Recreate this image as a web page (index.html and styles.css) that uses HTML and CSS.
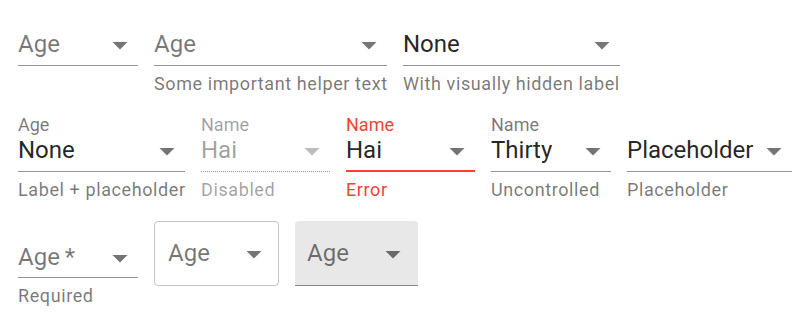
FILE: index.html
```html
<!DOCTYPE html>
<html lang="en">
<head>
<meta charset="utf-8">
<title>Simple selects</title>
<link rel="stylesheet" href="styles.css">
</head>
<body>
<form class="demo" autocomplete="off">
  <div class="row">
    <div class="fc w120">
      <label class="label">Age</label>
      <div class="input">
        <div class="select"></div>
        <svg class="arrow" viewBox="0 0 24 24"><path d="M7 10l5 5 5-5z"/></svg>
      </div>
    </div>
    <div class="fc w233">
      <label class="label">Age</label>
      <div class="input">
        <div class="select"></div>
        <svg class="arrow" viewBox="0 0 24 24"><path d="M7 10l5 5 5-5z"/></svg>
      </div>
      <p class="helper">Some important helper text</p>
    </div>
    <div class="fc w217">
      <div class="input">
        <div class="select">None</div>
        <svg class="arrow" viewBox="0 0 24 24"><path d="M7 10l5 5 5-5z"/></svg>
      </div>
      <p class="helper">With visually hidden label</p>
    </div>
  </div>

  <div class="row">
    <div class="fc w167">
      <label class="label shrink">Age</label>
      <div class="input">
        <div class="select">None</div>
        <svg class="arrow" viewBox="0 0 24 24"><path d="M7 10l5 5 5-5z"/></svg>
      </div>
      <p class="helper">Label + placeholder</p>
    </div>
    <div class="fc w129 disabled">
      <label class="label shrink">Name</label>
      <div class="input">
        <div class="select">Hai</div>
        <svg class="arrow" viewBox="0 0 24 24"><path d="M7 10l5 5 5-5z"/></svg>
      </div>
      <p class="helper">Disabled</p>
    </div>
    <div class="fc w129 error">
      <label class="label shrink">Name</label>
      <div class="input">
        <div class="select">Hai</div>
        <svg class="arrow" viewBox="0 0 24 24"><path d="M7 10l5 5 5-5z"/></svg>
      </div>
      <p class="helper">Error</p>
    </div>
    <div class="fc w120">
      <label class="label shrink">Name</label>
      <div class="input">
        <div class="select">Thirty</div>
        <svg class="arrow" viewBox="0 0 24 24"><path d="M7 10l5 5 5-5z"/></svg>
      </div>
      <p class="helper">Uncontrolled</p>
    </div>
    <div class="fc w165">
      <div class="input">
        <div class="select">Placeholder</div>
        <svg class="arrow" viewBox="0 0 24 24"><path d="M7 10l5 5 5-5z"/></svg>
      </div>
      <p class="helper">Placeholder</p>
    </div>
  </div>

  <div class="row">
    <div class="fc w120">
      <label class="label">Age<span class="asterisk">&thinsp;*</span></label>
      <div class="input">
        <div class="select"></div>
        <svg class="arrow" viewBox="0 0 24 24"><path d="M7 10l5 5 5-5z"/></svg>
      </div>
      <p class="helper">Required</p>
    </div>
    <div class="fc w125 outlined">
      <label class="label">Age</label>
      <div class="input">
        <div class="select"></div>
        <svg class="arrow" viewBox="0 0 24 24"><path d="M7 10l5 5 5-5z"/></svg>
      </div>
    </div>
    <div class="fc w123 filled">
      <label class="label">Age</label>
      <div class="input">
        <div class="select"></div>
        <svg class="arrow" viewBox="0 0 24 24"><path d="M7 10l5 5 5-5z"/></svg>
      </div>
    </div>
  </div>
</form>
</body>
</html>
```

FILE: styles.css
```css
html {
  font-size: 24px;
}

body {
  margin: 0;
  background: #fff;
  color: rgba(0, 0, 0, 0.87);
  font-family: Roboto, "Helvetica Neue", Arial, sans-serif;
}

.demo {
  padding: 0 0 0 10px;
}

.row {
  display: flex;
  align-items: flex-start;
}

.fc {
  position: relative;
  flex: none;
  display: flex;
  flex-direction: column;
  margin: 8px;
  min-width: 120px;
  box-sizing: border-box;
}

.w120 { width: 120px; }
.w123 { width: 123px; }
.w125 { width: 125px; }
.w129 { width: 129px; }
.w165 { width: 165px; }
.w167 { width: 167px; }
.w217 { width: 217px; }
.w233 { width: 233px; }

.label {
  position: absolute;
  left: 0;
  top: 0;
  z-index: 1;
  font-size: 1rem;
  line-height: 1;
  color: rgba(0, 0, 0, 0.54);
  white-space: nowrap;
  transform: translate(0, 24px);
  transform-origin: top left;
}

.label.shrink {
  font-size: 0.75rem;
  transform: translate(0, 1.5px);
}

.input {
  position: relative;
  margin-top: 16px;
  font-size: 1rem;
  line-height: 1.1876em;
  color: rgba(0, 0, 0, 0.87);
}

.input::before {
  content: "";
  position: absolute;
  left: 0;
  right: 0;
  bottom: 0;
  border-bottom: 1px solid rgba(0, 0, 0, 0.42);
}

.select {
  height: 1.1876em;
  padding: 6px 24px 7px 0;
  white-space: nowrap;
  overflow: hidden;
  text-overflow: ellipsis;
}

.arrow {
  position: absolute;
  right: 0;
  top: 50%;
  width: 1.5rem;
  height: 1.5rem;
  margin-top: -0.75rem;
  fill: rgba(0, 0, 0, 0.54);
}

.helper {
  margin: 3px 0 0;
  font-size: 0.75rem;
  line-height: 1.66;
  letter-spacing: 0.03333em;
  color: rgba(0, 0, 0, 0.54);
  white-space: nowrap;
}

/* disabled */
.disabled .label,
.disabled .select,
.disabled .helper {
  color: rgba(0, 0, 0, 0.38);
}

.disabled .input::before {
  border-bottom-style: dotted;
}

.disabled .arrow {
  fill: rgba(0, 0, 0, 0.26);
}

/* error */
.error .label,
.error .helper {
  color: #f44336;
}

.error .input::after {
  content: "";
  position: absolute;
  left: 0;
  right: 0;
  bottom: 0;
  border-bottom: 2px solid #f44336;
}

/* outlined */
.outlined .label {
  transform: translate(14px, 20px);
}

.outlined .input {
  margin-top: 0;
  border-radius: 4px;
}

.outlined .input::before {
  top: 0;
  border: 1px solid rgba(0, 0, 0, 0.23);
  border-radius: 4px;
}

.outlined .select {
  padding: 18.5px 32px 18.5px 14px;
}

.outlined .arrow,
.filled .arrow {
  right: 7px;
}

/* filled */
.filled .label {
  transform: translate(12px, 20px);
}

.filled .input {
  margin-top: 0;
  background: rgba(0, 0, 0, 0.09);
  border-radius: 4px 4px 0 0;
}

.filled .select {
  padding: 27px 32px 10px 12px;
}
```
